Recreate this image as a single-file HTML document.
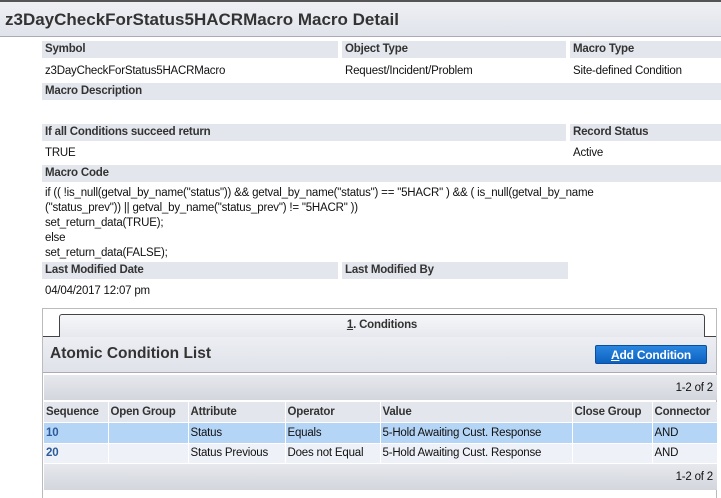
<!DOCTYPE html>
<html><head><meta charset="utf-8"><style>
*{margin:0;padding:0;box-sizing:border-box}
body{width:721px;height:494px;overflow:hidden;background:#fff;font-family:"Liberation Sans",sans-serif;font-size:11.5px;color:#111;position:relative;letter-spacing:-0.2px}
.a{position:absolute;white-space:nowrap}
.bar{position:absolute;background:#e3e6ec;height:17px;font-weight:bold;padding:2px 3px;color:#333}
.v{position:absolute;padding:0 3px;white-space:nowrap}
.hdr{position:absolute;left:0;top:0;width:721px;height:37px;border-top:2px solid #555;border-bottom:1px solid #aab;background:linear-gradient(#eef0f4,#e0e3ea)}
.hdr span{position:absolute;left:5px;top:8px;font-size:17px;font-weight:bold;color:#333;letter-spacing:0}
table{position:absolute;left:44px;top:402px;border-collapse:collapse;width:673px;table-layout:fixed}
td,th{height:20.5px;padding:0 2px;text-align:left;white-space:nowrap;overflow:hidden;border-right:1px solid #fff;border-bottom:1px solid #fff}
th{background:#e3e6ec;color:#333}
.r1 td{background:#b5d5f7}
.r2 td{background:#eef1f8}
.lnk{color:#2b5b9a;font-weight:bold}
</style></head><body>
<div class="hdr"><span>z3DayCheckForStatus5HACRMacro Macro Detail</span></div>

<div class="bar" style="left:42px;top:41px;width:296px">Symbol</div>
<div class="bar" style="left:342px;top:41px;width:224px">Object Type</div>
<div class="bar" style="left:570px;top:41px;width:151px">Macro Type</div>
<div class="v" style="left:42px;top:65px">z3DayCheckForStatus5HACRMacro</div>
<div class="v" style="left:342px;top:65px">Request/Incident/Problem</div>
<div class="v" style="left:570px;top:65px">Site-defined Condition</div>
<div class="bar" style="left:42px;top:83px;width:679px">Macro Description</div>
<div class="bar" style="left:42px;top:124px;width:524px">If all Conditions succeed return</div>
<div class="bar" style="left:570px;top:124px;width:151px">Record Status</div>
<div class="v" style="left:42px;top:147px">TRUE</div>
<div class="v" style="left:570px;top:147px">Active</div>
<div class="bar" style="left:42px;top:165px;width:679px">Macro Code</div>
<div class="v" style="left:42px;top:186px;line-height:15.1px">if (( !is_null(getval_by_name("status")) &amp;&amp; getval_by_name("status") == "5HACR" ) &amp;&amp; ( is_null(getval_by_name<br>("status_prev")) || getval_by_name("status_prev") != "5HACR" ))<br>set_return_data(TRUE);<br>else<br>set_return_data(FALSE);</div>
<div class="bar" style="left:42px;top:262px;width:296px">Last Modified Date</div>
<div class="bar" style="left:342px;top:262px;width:226px">Last Modified By</div>
<div class="v" style="left:42px;top:285px">04/04/2017 12:07 pm</div>

<div class="a" style="left:42px;top:308px;width:675px;height:190px;border:1px solid #bbb;border-bottom:none"></div>
<div class="a" style="left:43px;top:336px;width:673px;height:37px;background:linear-gradient(#eceef3,#dfe2e9);border-top:1px solid #444;border-bottom:1px solid #aab"></div>
<div class="a" style="left:59px;top:314px;width:646px;height:23px;border:1px solid #444;border-bottom:none;border-radius:3px 3px 0 0;background:linear-gradient(#f6f7f9,#e6e8ee);text-align:center;font-weight:bold;padding-top:4px;color:#333"><u>1</u>. Conditions</div>
<div class="a" style="left:50px;top:345px;font-size:15.5px;font-weight:bold;color:#333;letter-spacing:0">Atomic Condition List</div>
<div class="a" style="left:595px;top:345px;width:112px;height:19px;background:linear-gradient(#2a86e0,#0d62c0);border:1px solid #0a4f9e;border-radius:2px;color:#fff;font-weight:bold;text-align:center;padding-top:2px;font-size:12px"><u>A</u>dd Condition</div>
<div class="a" style="left:44px;top:375px;width:673px;height:25px;background:linear-gradient(#e6e8ed,#d3d6dd);text-align:right;padding:7px 4px 0 0">1-2 of 2</div>
<table>
<colgroup><col style="width:64px"><col style="width:80px"><col style="width:97px"><col style="width:95px"><col style="width:192px"><col style="width:80px"><col style="width:65px"></colgroup>
<tr><th>Sequence</th><th>Open Group</th><th>Attribute</th><th>Operator</th><th>Value</th><th>Close Group</th><th>Connector</th></tr>
<tr class="r1"><td class="lnk">10</td><td></td><td>Status</td><td>Equals</td><td>5-Hold Awaiting Cust. Response</td><td></td><td>AND</td></tr>
<tr class="r2"><td class="lnk">20</td><td></td><td>Status Previous</td><td>Does not Equal</td><td>5-Hold Awaiting Cust. Response</td><td></td><td>AND</td></tr>
</table>
<div class="a" style="left:44px;top:464px;width:673px;height:26px;background:linear-gradient(#e6e8ed,#d3d6dd);text-align:right;padding:7px 4px 0 0">1-2 of 2</div>
</body></html>
